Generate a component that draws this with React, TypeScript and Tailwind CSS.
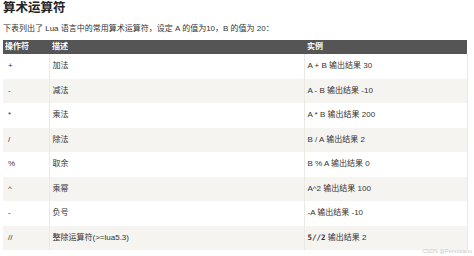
const rows: [string, string, React.ReactNode][] = [
  ["+", "加法", "A + B 输出结果 30"],
  ["-", "减法", "A - B 输出结果 -10"],
  ["*", "乘法", "A * B 输出结果 200"],
  ["/", "除法", "B / A 输出结果 2"],
  ["%", "取余", "B % A 输出结果 0"],
  ["^", "乘幂", "A^2 输出结果 100"],
  ["-", "负号", "-A 输出结果 -10"],
  [
    "//",
    "整除运算符(>=lua5.3)",
    <>
      <code className="font-['DejaVu_Sans_Mono',monospace] text-[7.5px] font-bold text-[#333]">5//2</code> 输出结果 2
    </>,
  ],
];

export default function App() {
  return (
    <div className="relative h-[256px] w-[474px] overflow-hidden bg-white pl-[3px] font-['Liberation_Sans','Noto_Sans_CJK_SC',sans-serif] text-[#333]">
      <h1 className="h-[18px] text-[12.5px] leading-[17px] font-bold text-[#222]">算术运算符</h1>
      <p className="mt-[4px] h-[14px] text-[8px] leading-[14px]">
        下表列出了 Lua 语言中的常用算术运算符，设定 A 的值为10，B 的值为 20：
      </p>
      <table className="mt-[4px] w-[464px] table-fixed border-collapse text-[8px]">
        <colgroup>
          <col className="w-[46px]" />
          <col className="w-[255px]" />
          <col className="w-[163px]" />
        </colgroup>
        <thead>
          <tr className="h-[14px] bg-[#555555] text-left text-white">
            <th className="px-[2px] leading-[14px] font-bold">操作符</th>
            <th className="px-[3px] leading-[14px] font-bold">描述</th>
            <th className="px-[3px] leading-[14px] font-bold">实例</th>
          </tr>
        </thead>
        <tbody>
          {rows.map(([op, desc, ex], i) => (
            <tr key={i} className={i % 2 === 1 ? "h-[24.5px] bg-[#f6f4f0]" : "h-[24.5px] bg-white"}>
              <td className="border-r border-[#ebe9e4] pl-[5px]">{op}</td>
              <td className="border-r border-[#ebe9e4] pl-[3px]">{desc}</td>
              <td className="border-r border-[#ebe9e4] pl-[3px]">{ex}</td>
            </tr>
          ))}
        </tbody>
      </table>
      <div className="absolute right-[2px] bottom-[1px] text-[5.5px] text-[#c8c8c8]">CSDN @Pennoranu</div>
    </div>
  );
}
